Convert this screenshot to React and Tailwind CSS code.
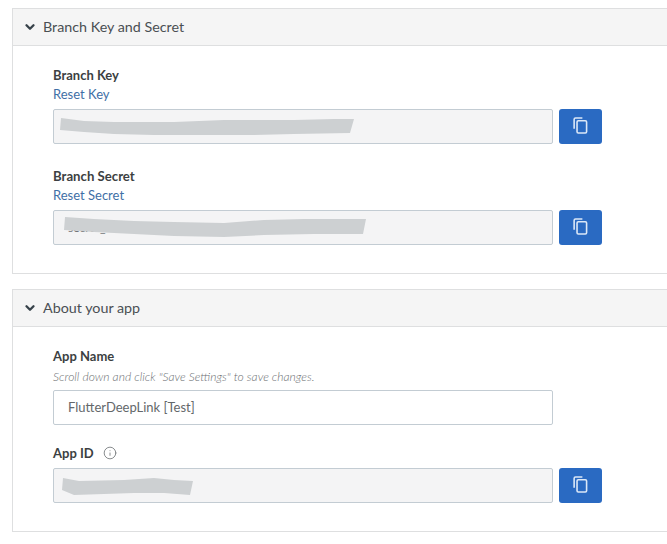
import React from "react";
import { ChevronDown, Info } from "lucide-react";

const fontCls = "font-['Lato','Noto_Sans',sans-serif]";

function CopyButton() {
  return (
    <button className="ml-[6px] flex h-[35px] w-[43px] shrink-0 items-center justify-center rounded-[3px] bg-[#2a6ac2] pb-[3px] pr-[1px]">
      <svg width="15" height="17" viewBox="0 0 16 18" fill="none" stroke="#dce8f7" strokeWidth="1.7">
        <path d="M1.2 12.5V2.5Q1.2 1 2.7 1H10" />
        <rect x="4.3" y="4" width="10.2" height="13" rx="1.3" />
      </svg>
    </button>
  );
}

function Smear({ width, points }) {
  return (
    <svg className="absolute left-0 top-0" width={width} height="33" viewBox={`0 0 ${width} 33`}>
      <polygon points={points} fill="#cdd0d2" />
    </svg>
  );
}

function ReadOnlyField({ children }) {
  return (
    <div className="flex">
      <div className="relative h-[35px] w-[500px] rounded-[2px] border border-[#c3ccd3] bg-[#f4f4f5]">
        {children}
      </div>
      <CopyButton />
    </div>
  );
}

function Section({ title, className, children }) {
  return (
    <section className={`ml-3 border border-r-0 border-[#dedfe0] ${className}`}>
      <div className="flex h-[37px] items-center border-b border-[#dedfe0] bg-[#f5f5f5] pl-[10px]">
        <ChevronDown size={14} strokeWidth={4} className="text-[#37424a]" />
        <h2 className="ml-[6px] text-[14.3px] leading-none text-[#4a4f53]">{title}</h2>
      </div>
      {children}
    </section>
  );
}

export default function App() {
  return (
    <div className={`h-[544px] w-[667px] overflow-hidden bg-white pt-2 ${fontCls}`}>
      <Section title="Branch Key and Secret" className="h-[266px]">
        <div className="pl-10 pt-[20px]">
          <div className="h-[19px] text-[13px] font-bold leading-[19px] text-[#3c3f42]">Branch Key</div>
          <a className="block h-[24px] text-[13px] leading-[19px] text-[#3f6fa6]">Reset Key</a>
          <ReadOnlyField>
            <Smear
              width={302}
              points="7,8 30,11 60,12 120,12 170,10 200,10 240,10 280,9 300,9 296,23 240,24 200,25 150,25 100,25 60,24 30,22 6,20"
            />
          </ReadOnlyField>

          <div className="mt-[23px] h-[19px] text-[13.2px] font-bold leading-[19px] text-[#3c3f42]">Branch Secret</div>
          <a className="block h-[24px] text-[13px] leading-[19px] text-[#3f6fa6]">Reset Secret</a>
          <ReadOnlyField>
            <span className="absolute left-[14px] top-[9px] text-[12px] leading-[15px] text-[#6a6d70]">secret_</span>
            <Smear
              width={314}
              points="11,6 40,8 80,10 120,11 170,12 210,9 250,8 290,8 312,8 309,23 260,23 210,24 170,26 120,25 80,23 40,21 10,19"
            />
          </ReadOnlyField>
        </div>
      </Section>

      <Section title="About your app" className="mt-[15px] h-[243px]">
        <div className="pl-10 pt-[20px]">
          <div className="h-[19px] text-[13px] font-bold leading-[19px] text-[#3c3f42]">App Name</div>
          <div className="h-[24px] pt-[1px] text-[12.1px] font-light italic leading-[19px] text-[#6c7073]">
            Scroll down and click "Save Settings" to save changes.
          </div>
          <div className="flex h-[35px] w-[500px] items-center rounded-[2px] border border-[#c3ccd3] bg-white pl-[14px] text-[13px] text-[#63676a]">
            FlutterDeepLink [Test]
          </div>

          <div className="mt-[19px] flex h-[24px] items-start">
            <span className="text-[13px] font-bold leading-[19px] text-[#3c3f42]">App ID</span>
            <Info size={14} strokeWidth={1.5} className="ml-[9px] mt-[2px] text-[#777b7e]" />
          </div>
          <ReadOnlyField>
            <Smear
              width={142}
              points="9,9 25,12 70,11 100,9 120,11 139,12 136,26 110,24 80,24 50,25 20,26 8,21"
            />
          </ReadOnlyField>
        </div>
      </Section>
    </div>
  );
}
